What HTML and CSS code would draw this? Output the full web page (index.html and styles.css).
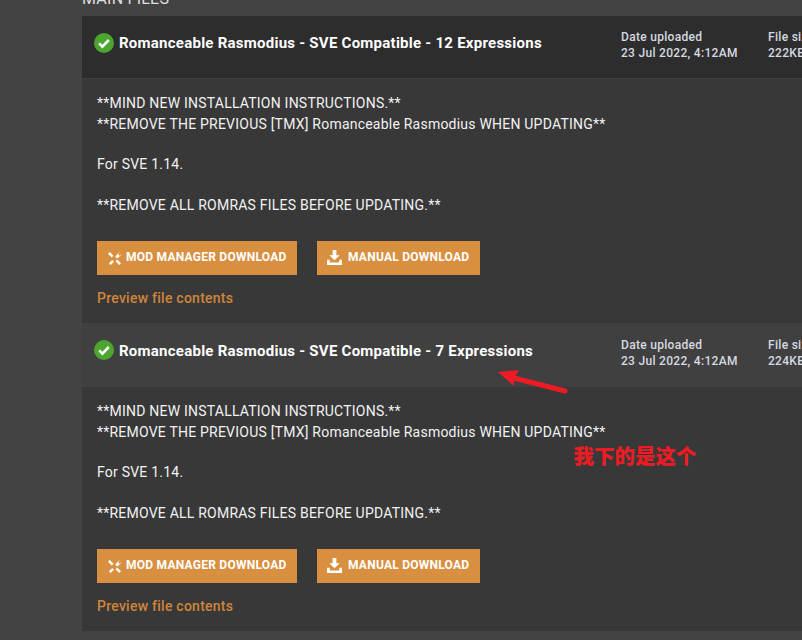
FILE: index.html
```html
<!DOCTYPE html>
<html>
<head>
    <title>Files</title>
    <link rel="stylesheet" href="styles.css">
</head>
<body>
    <div id="files">
        <h2 class="files-title">MAIN FILES</h2>

        <div class="file">
            <div class="file-header">
                <svg class="check" viewBox="0 0 20 20"><circle cx="10" cy="10" r="10" fill="#4ca52f"/><path d="M5.2 10.4l3.2 3.2 6.4-6.6" fill="none" stroke="#fff" stroke-width="2.6"/></svg>
                <div class="file-name">Romanceable Rasmodius - SVE Compatible - 12 Expressions</div>
                <div class="stat stat-date">Date uploaded<br>23 Jul 2022, 4:12AM</div>
                <div class="stat">File size<br>222KB</div>
            </div>
            <div class="file-body">
                <p>**MIND NEW INSTALLATION INSTRUCTIONS.**<br>**REMOVE THE PREVIOUS [TMX] Romanceable Rasmodius WHEN UPDATING**</p>
                <p>For SVE 1.14.</p>
                <p>**REMOVE ALL ROMRAS FILES BEFORE UPDATING.**</p>
                <div class="buttons">
                    <div class="button button-mod">
                        <svg class="icon-mod" viewBox="0 0 16 16"><path d="M2 2l4 4M3 14l3.5-3.5M10 10l4 4" fill="none" stroke="#fff" stroke-width="2.6"/><path d="M9.6 6.8L8.8 6l3-3.6 2-1.4-2 2.4 1.6 1.6 2.4-2-1.4 2-3.6 3z" fill="#fff"/></svg>
                        MOD MANAGER DOWNLOAD
                    </div>
                    <div class="button button-manual">
                        <svg class="icon-dl" viewBox="0 0 16 16"><path d="M6 0h4v5.5h3.5L8 11 2.500 5.500H6zM0 10.500h3v2.800h10v-2.800h3V16H0z" fill="#fff"/></svg>
                        MANUAL DOWNLOAD
                    </div>
                </div>
                <a class="preview">Preview file contents</a>
            </div>
        </div>

        <div class="file">
            <div class="file-header file-header-light">
                <svg class="check" viewBox="0 0 20 20"><circle cx="10" cy="10" r="10" fill="#4ca52f"/><path d="M5.2 10.4l3.2 3.2 6.4-6.6" fill="none" stroke="#fff" stroke-width="2.6"/></svg>
                <div class="file-name">Romanceable Rasmodius - SVE Compatible - 7 Expressions</div>
                <div class="stat stat-date">Date uploaded<br>23 Jul 2022, 4:12AM</div>
                <div class="stat">File size<br>224KB</div>
            </div>
            <div class="file-body">
                <p>**MIND NEW INSTALLATION INSTRUCTIONS.**<br>**REMOVE THE PREVIOUS [TMX] Romanceable Rasmodius WHEN UPDATING**</p>
                <p>For SVE 1.14.</p>
                <p>**REMOVE ALL ROMRAS FILES BEFORE UPDATING.**</p>
                <div class="buttons">
                    <div class="button button-mod">
                        <svg class="icon-mod" viewBox="0 0 16 16"><path d="M2 2l4 4M3 14l3.5-3.5M10 10l4 4" fill="none" stroke="#fff" stroke-width="2.6"/><path d="M9.6 6.8L8.8 6l3-3.6 2-1.4-2 2.4 1.6 1.6 2.4-2-1.4 2-3.6 3z" fill="#fff"/></svg>
                        MOD MANAGER DOWNLOAD
                    </div>
                    <div class="button button-manual">
                        <svg class="icon-dl" viewBox="0 0 16 16"><path d="M6 0h4v5.5h3.5L8 11 2.500 5.500H6zM0 10.500h3v2.800h10v-2.800h3V16H0z" fill="#fff"/></svg>
                        MANUAL DOWNLOAD
                    </div>
                </div>
                <a class="preview">Preview file contents</a>
            </div>
        </div>
    </div>

    <!-- red annotation drawn on top of the screenshot -->
    <svg class="arrow" viewBox="0 0 74 28"><path d="M68 23L17 10" stroke="#ed1c24" stroke-width="5" stroke-linecap="round"/><path d="M1 4L22 2 17 10 17 18z" fill="#ed1c24"/></svg>
    <div class="note">我下的是这个</div>
</body>
</html>
```

FILE: styles.css
```css
html, body {
    height: 100%;
}

body {
    margin: 0;
    overflow: hidden;
    position: relative;
    background-color: #434343;
    font-family: Roboto, "Liberation Sans", sans-serif;
    color: #fff;
    letter-spacing: .25px;
}

#files {
    padding-left: 82px;
    margin-top: -11px;
    width: 820px;
}

.files-title {
    margin: 0;
    height: 27px;
    font-size: 16px;
    line-height: 19px;
    font-weight: 400;
    color: #dedede;
}

.file-header {
    display: flex;
    align-items: flex-start;
    height: 62px;
    background-color: #2d2d2d;
    border-bottom: 1px solid #3f3f3f;
}

.file-header-light {
    height: 64px;
    background-color: #404040;
    border-bottom: 0;
}

.check {
    width: 20px;
    height: 20px;
    margin: 17px 5px 0 12px;
    flex: none;
}

.file-name {
    width: 502px;
    margin-top: 17px;
    font-size: 15px;
    line-height: 20px;
    font-weight: 700;
    flex: none;
}

.file-header-light .file-name {
    margin-top: 18px;
}

.stat {
    margin-top: 13px;
    font-size: 12px;
    line-height: 16px;
    font-weight: 500;
    letter-spacing: .3px;
    color: #d5dae0;
    white-space: nowrap;
}

.file-header-light .stat {
    margin-top: 14px;
}

.stat-date {
    width: 147px;
    flex: none;
}

.file-body {
    height: 244px;
    padding: 14px 15px 0;
    box-sizing: border-box;
    background-color: #383838;
}

.file-body p {
    margin: 0 0 20px;
    font-size: 14px;
    line-height: 20.5px;
    letter-spacing: .22px;
    color: #f2f2f2;
}

.buttons {
    display: flex;
    gap: 20px;
    margin-top: 26px;
}

.button {
    display: flex;
    align-items: center;
    height: 34px;
    box-sizing: border-box;
    background-color: #d98f40;
    font-size: 12px;
    font-weight: 700;
    white-space: nowrap;
    padding-bottom: 2px;
}

.button-mod {
    width: 200px;
    padding-left: 10px;
}

.button-manual {
    width: 163px;
    padding-left: 10px;
}

.icon-mod {
    width: 15px;
    height: 15px;
    margin: 3px 4px 0 0;
}

.icon-dl {
    width: 15px;
    height: 15px;
    margin: 0 6px 0 0;
}

.preview {
    display: block;
    margin-top: 15px;
    font-size: 14px;
    line-height: 17px;
    font-weight: 500;
    color: #d0853b;
}

.arrow {
    position: absolute;
    left: 497px;
    top: 368px;
    width: 74px;
    height: 28px;
}

.note {
    position: absolute;
    left: 573.500px;
    top: 444px;
    font-family: "Noto Sans CJK SC", sans-serif;
    font-size: 20.500px;
    line-height: 22px;
    font-weight: 900;
    letter-spacing: 0;
    color: #ed1c24;
}
```
